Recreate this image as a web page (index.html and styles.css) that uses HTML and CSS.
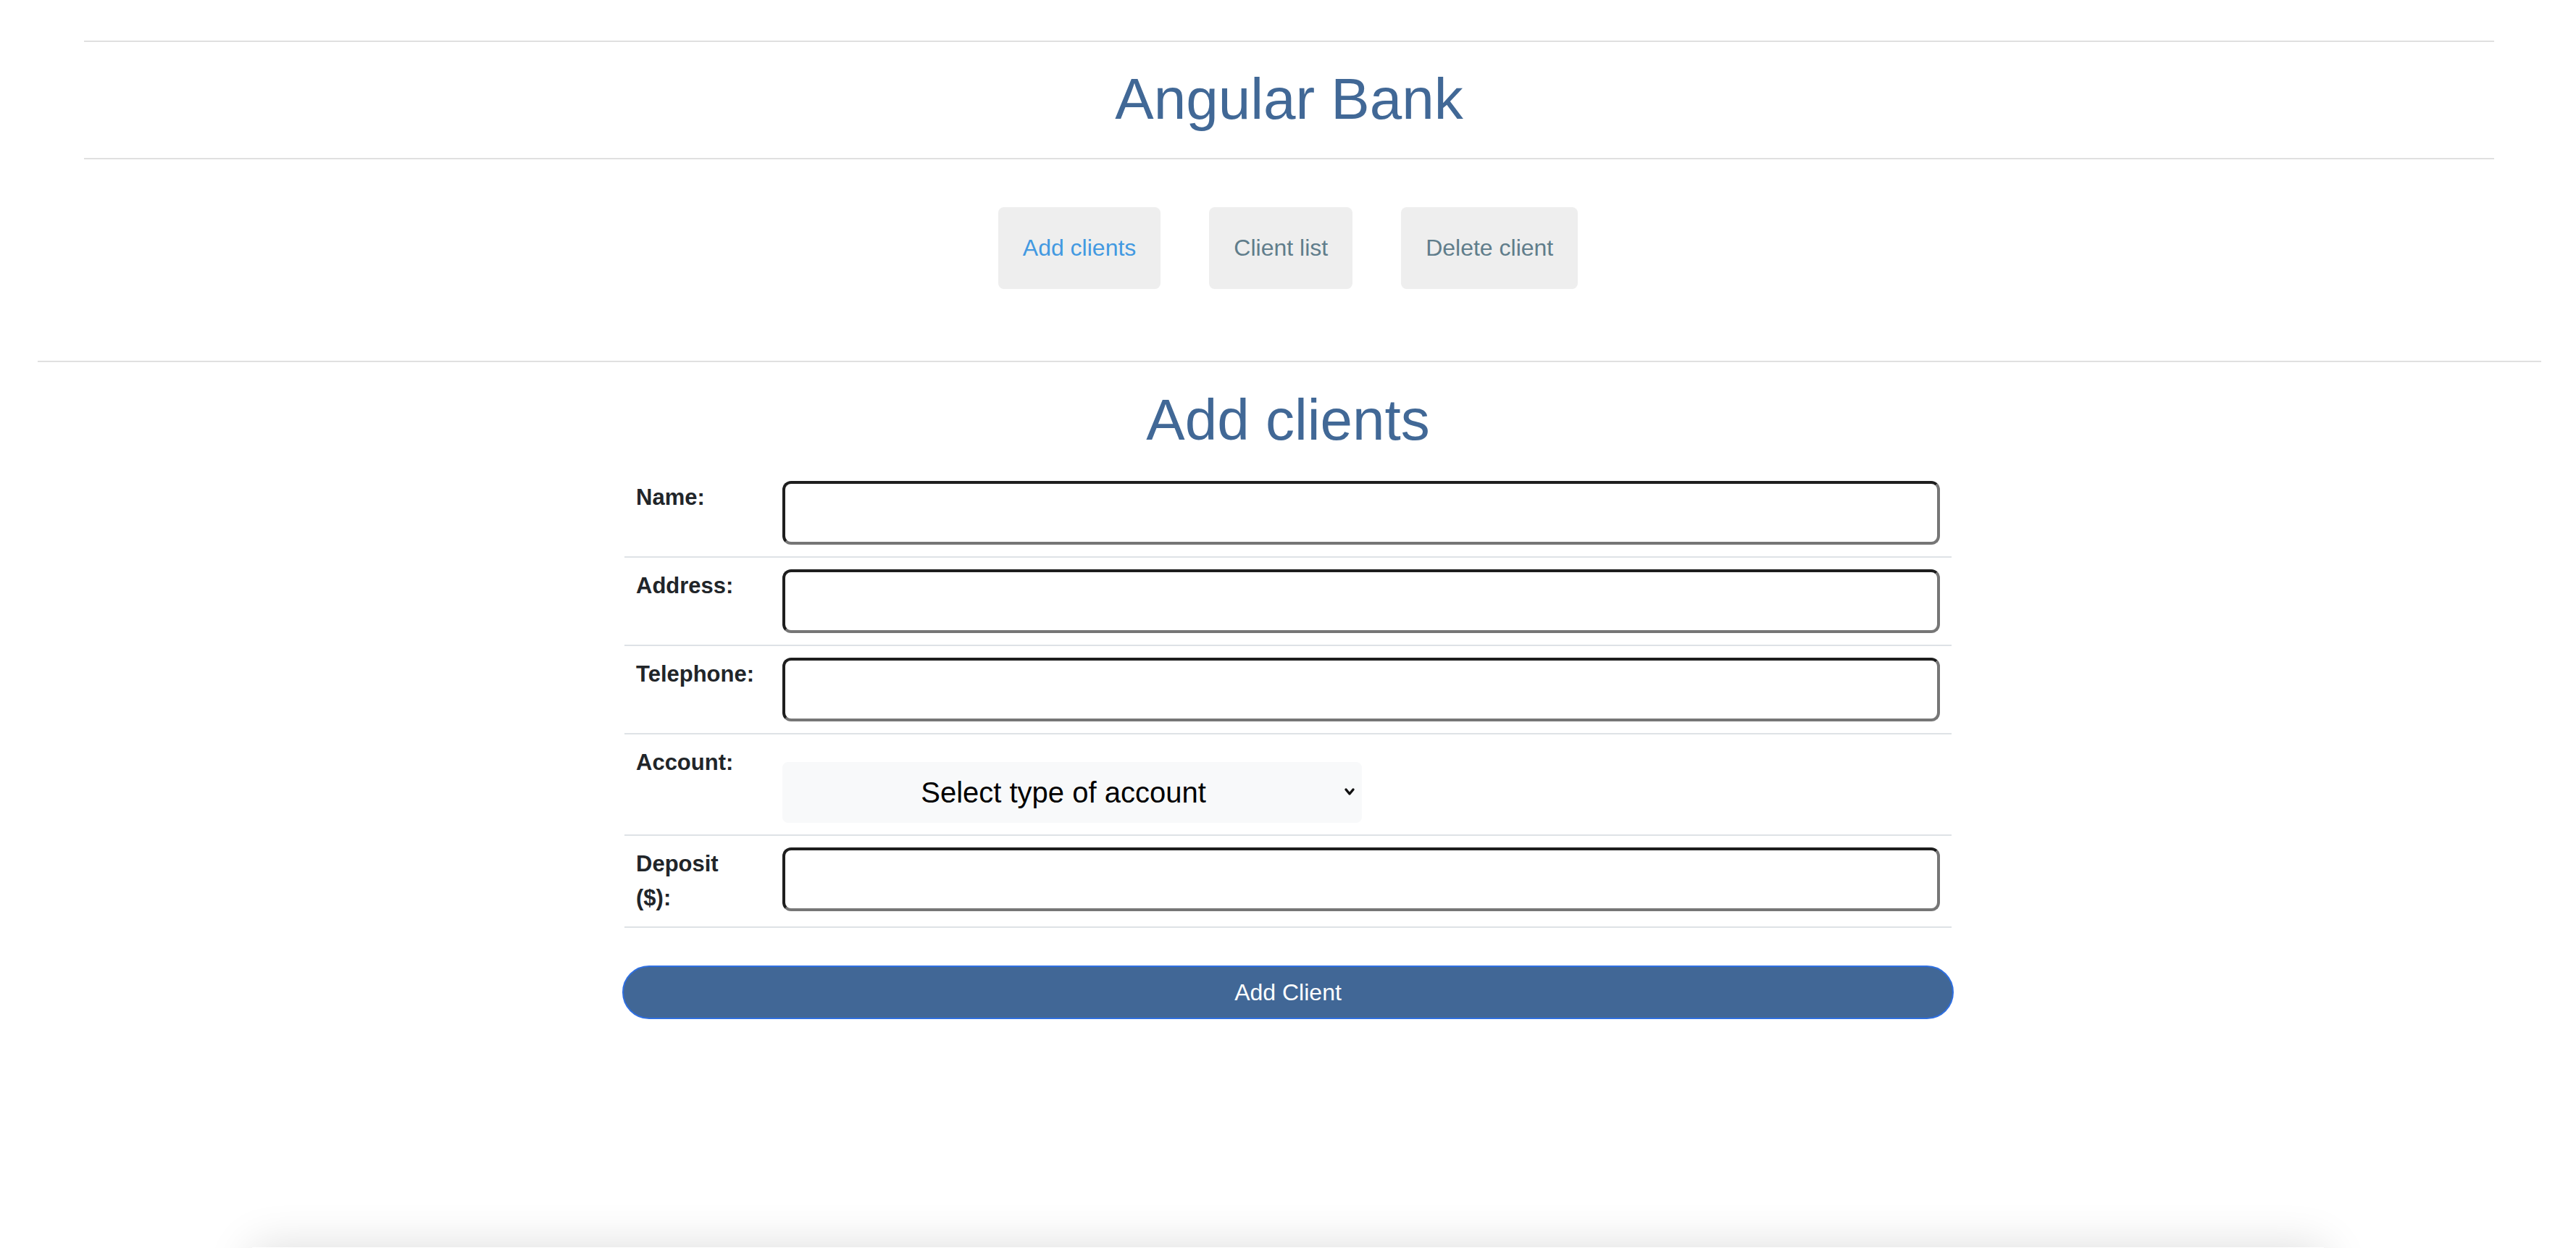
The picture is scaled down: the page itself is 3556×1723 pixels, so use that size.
FILE: index.html
```html
<html>
	<head>
		<title>Angular Bank</title>
		<link rel="stylesheet" href="styles.css">
	</head>
	<body>

		<header class="Header">
			<hr class="Rule"/>
			<h1 class="Brand">Angular Bank</h1>
			<hr class="Rule"/>
		</header>

		<nav class="Menu">
			<a class="MenuItem Active">Add clients</a>
			<a class="MenuItem">Client list</a>
			<a class="MenuItem">Delete client</a>
		</nav>

		<hr class="Rule Wide"/>

		<main class="Content">
			<h2 class="PageTitle">Add clients</h2>

			<form class="ClientForm">
				<div class="FormRow">
					<label class="FormLabel">Name:</label>
					<div class="FormField"><input type="text" class="FormInput"/></div>
				</div>
				<div class="FormRow">
					<label class="FormLabel">Address:</label>
					<div class="FormField"><input type="text" class="FormInput"/></div>
				</div>
				<div class="FormRow">
					<label class="FormLabel">Telephone:</label>
					<div class="FormField"><input type="text" class="FormInput"/></div>
				</div>
				<div class="FormRow">
					<label class="FormLabel">Account:</label>
					<div class="FormField">
						<span class="SelectWrap">
							<select class="FormSelect">
								<option>Select type of account</option>
								<option>Savings</option>
								<option>Checking</option>
							</select>
							<svg class="SelectArrow" width="18" height="14" viewBox="0 0 18 14">
								<polyline points="4,4 9,10 14,4" fill="none" stroke="#111" stroke-width="3.4" stroke-linecap="round" stroke-linejoin="round"/>
							</svg>
						</span>
					</div>
				</div>
				<div class="FormRow">
					<label class="FormLabel">Deposit ($):</label>
					<div class="FormField"><input type="text" class="FormInput"/></div>
				</div>

				<button type="button" class="SubmitBtn">Add Client</button>
			</form>
		</main>

		<footer class="Footer"></footer>

	</body>
</html>
```

FILE: styles.css
```css
html, body {margin: 0; background-color: #fff; font-family: "Liberation Sans", Arial, sans-serif;}

.Rule {
	margin: 0;
	height: 0;
	border: 0;
	border-top: 2px solid #e0e0e0;
}
.Rule.Wide {
	margin: 0 48px 0 52px;
}

.Header {
	padding: 56px 113px 0 116px;
}
.Brand {
	margin: 0;
	height: 160px;
	line-height: 158px;
	text-align: center;
	font-size: 80px;
	font-weight: normal;
	color: #416896;
}

.Menu {
	display: flex;
	justify-content: center;
	gap: 67px;
	margin: 66px 0 99px 0;
}
.MenuItem {
	padding: 38px 34px;
	line-height: 37px;
	font-size: 32px;
	color: #607d8b;
	background-color: #eeeeee;
	border-radius: 8px;
	cursor: pointer;
}
.MenuItem.Active {
	color: #4299e1;
}

.Content {
	padding: 0;
}
.PageTitle {
	margin: 34px 0 22px 0;
	line-height: 92px;
	text-align: center;
	font-size: 80px;
	font-weight: normal;
	color: #416896;
}

.ClientForm {
	width: 1832px;
	margin: 0 auto;
}
.FormRow {
	display: grid;
	grid-template-columns: 218px 1fr;
	align-items: start;
	border-bottom: 2px solid #dee2e6;
}
.FormLabel {
	width: 166px;
	padding: 16px 36px 16px 16px;
	font-size: 31px;
	line-height: 1.5;
	font-weight: bold;
	color: #212529;
}
.FormField {
	padding: 16px 16px 16px 0;
}
.FormInput {
	display: block;
	box-sizing: border-box;
	width: 100%;
	height: 88px;
	margin: 0;
	border: 4px solid;
	border-color: #1e1e1e #767676 #767676 #1e1e1e;
	border-radius: 12px;
	background-color: #fff;
	font-size: 32px;
}

.SelectWrap {
	position: relative;
	display: block;
	width: 800px;
	margin-top: 22px;
}
.FormSelect {
	display: block;
	box-sizing: border-box;
	width: 800px;
	height: 84px;
	padding: 0 48px 0 24px;
	border: 0;
	border-radius: 8px;
	background-color: #f8f9fa;
	color: #000;
	font-family: "Liberation Sans", Arial, sans-serif;
	font-size: 40px;
	text-align: center;
	text-align-last: center;
	-webkit-appearance: none;
	appearance: none;
}
.SelectArrow {
	position: absolute;
	right: 8px;
	top: 34px;
	pointer-events: none;
}

.SubmitBtn {
	display: block;
	box-sizing: border-box;
	width: calc(100% + 6px);
	height: 74px;
	margin: 52px 0 0 -3px;
	border: 2px solid #2f6fe0;
	border-radius: 37px;
	background-color: #416796;
	color: #fff;
	font-family: "Liberation Sans", Arial, sans-serif;
	font-size: 32px;
	cursor: pointer;
}

.Footer {
	width: 2860px;
	height: 200px;
	margin: 315px auto 0 auto;
	background-color: #fff;
	box-shadow: 0 0 60px rgba(0, 0, 0, 0.14);
}
```
